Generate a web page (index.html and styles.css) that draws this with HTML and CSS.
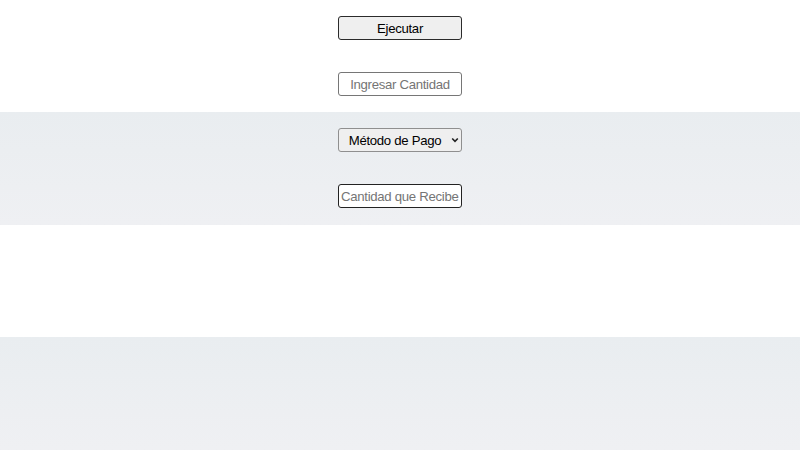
FILE: index.html
```html
<!DOCTYPE html>
<html lang="es">
<head>
<meta charset="utf-8">
<title>Pago</title>
<link rel="stylesheet" href="styles.css">
</head>
<body>
<main class="form">
  <button class="btn" type="button">Ejecutar</button>
  <input class="field" type="text" placeholder="Ingresar Cantidad">
  <span class="select-wrap">
    <select class="select">
      <option>Método de Pago</option>
    </select>
    <svg class="chev" width="8" height="6" viewBox="0 0 8 6" aria-hidden="true"><path d="M1.2 1.5 L4 4.3 L6.8 1.5" fill="none" stroke="#222" stroke-width="1.6"/></svg>
  </span>
  <input class="field field-dark" type="text" placeholder="Cantidad que Recibe">
</main>
</body>
</html>
```
FILE: styles.css
```css
html {
  background: linear-gradient(to bottom, #ffffff 0, #ffffff 112px, #e9edf0 112px, #eff0f3 225px);
  background-size: 100% 225px;
  background-repeat: repeat-y;
}
body {
  margin: 0;
  font-family: "Liberation Sans", Arial, sans-serif;
}
.form {
  display: flex;
  flex-direction: column;
  align-items: center;
  gap: 32px;
  padding: 16px 0 17px;
}
.btn, .field, .select {
  box-sizing: border-box;
  width: 124px;
  height: 24px;
  font-family: "Liberation Sans", Arial, sans-serif;
  font-size: 13.2px;
  letter-spacing: -0.3px;
  margin: 0;
  border-radius: 3px;
}
.btn {
  background: #efefef;
  border: 1.5px solid #2b2b2b;
  color: #000;
  padding: 0;
}
.field {
  background: #fff;
  border: 1.5px solid #767676;
  padding: 0 2px;
  color: #000;
  text-align: center;
}
.field::placeholder {
  color: #757575;
}
.field-dark {
  border-color: #222;
  text-align: left;
  padding: 0 2px;
}
.select-wrap {
  position: relative;
  display: block;
  width: 124px;
  height: 24px;
}
.select {
  display: block;
  appearance: none;
  -webkit-appearance: none;
  background: #efefef;
  border: 1px solid #8f8f8f;
  color: #000;
  padding: 0 14px 0 4px;
  text-align: center;
  text-align-last: center;
}
.chev {
  position: absolute;
  right: 3px;
  top: 9px;
  pointer-events: none;
}
```
